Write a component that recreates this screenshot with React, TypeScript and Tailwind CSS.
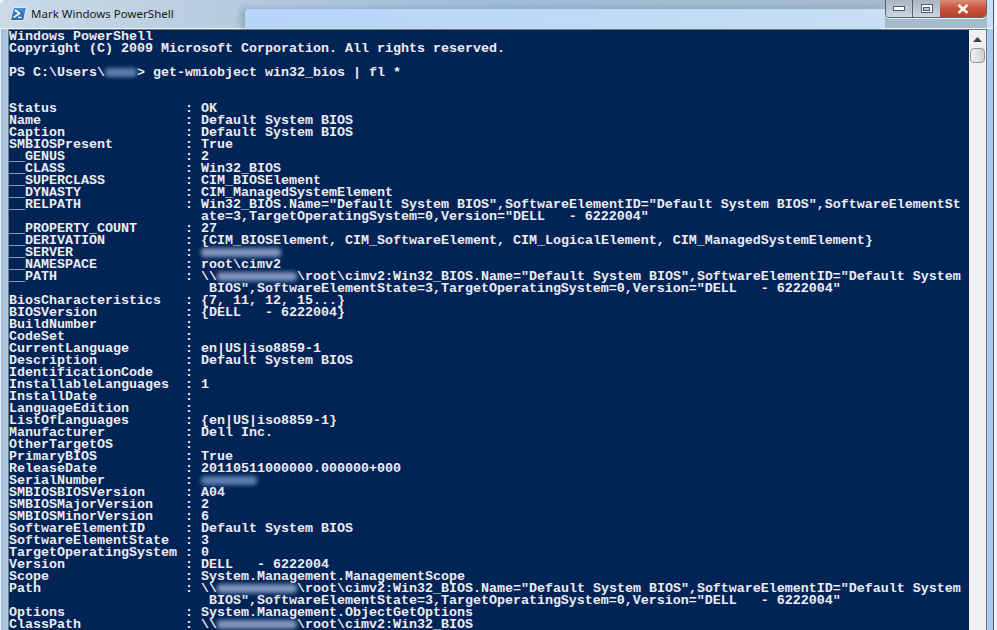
const name = <span className="inline-block h-[9px] w-[80px] align-[-1px] rounded-sm bg-[#8296bd] blur-[2px]" />;
const user = <span className="inline-block h-[9px] w-[32px] align-[-1px] rounded-sm bg-[#5f7db0] blur-[2px]" />;
const serial = <span className="inline-block h-[9px] w-[56px] align-[-1px] rounded-sm bg-[#5f7db0] blur-[2px]" />;

function prop(key: string, value: React.ReactNode = '') {
  return (
    <>
      {key.padEnd(22, ' ')}: {value}
    </>
  );
}

const lines: React.ReactNode[] = [
  'Windows PowerShell',
  'Copyright (C) 2009 Microsoft Corporation. All rights reserved.',
  '',
  <>PS C:\Users\{user}&gt; get-wmiobject win32_bios | fl *</>,
  '',
  '',
  prop('Status', 'OK'),
  prop('Name', 'Default System BIOS'),
  prop('Caption', 'Default System BIOS'),
  prop('SMBIOSPresent', 'True'),
  prop('__GENUS', '2'),
  prop('__CLASS', 'Win32_BIOS'),
  prop('__SUPERCLASS', 'CIM_BIOSElement'),
  prop('__DYNASTY', 'CIM_ManagedSystemElement'),
  prop('__RELPATH', 'Win32_BIOS.Name="Default System BIOS",SoftwareElementID="Default System BIOS",SoftwareElementSt'),
  ' '.repeat(24) + 'ate=3,TargetOperatingSystem=0,Version="DELL   - 6222004"',
  prop('__PROPERTY_COUNT', '27'),
  prop('__DERIVATION', '{CIM_BIOSElement, CIM_SoftwareElement, CIM_LogicalElement, CIM_ManagedSystemElement}'),
  prop('__SERVER', name),
  prop('__NAMESPACE', 'root\\cimv2'),
  prop('__PATH', <>\\{name}\root\cimv2:Win32_BIOS.Name="Default System BIOS",SoftwareElementID="Default System</>),
  ' '.repeat(25) + 'BIOS",SoftwareElementState=3,TargetOperatingSystem=0,Version="DELL   - 6222004"',
  prop('BiosCharacteristics', '{7, 11, 12, 15...}'),
  prop('BIOSVersion', '{DELL   - 6222004}'),
  prop('BuildNumber'),
  prop('CodeSet'),
  prop('CurrentLanguage', 'en|US|iso8859-1'),
  prop('Description', 'Default System BIOS'),
  prop('IdentificationCode'),
  prop('InstallableLanguages', '1'),
  prop('InstallDate'),
  prop('LanguageEdition'),
  prop('ListOfLanguages', '{en|US|iso8859-1}'),
  prop('Manufacturer', 'Dell Inc.'),
  prop('OtherTargetOS'),
  prop('PrimaryBIOS', 'True'),
  prop('ReleaseDate', '20110511000000.000000+000'),
  prop('SerialNumber', serial),
  prop('SMBIOSBIOSVersion', 'A04'),
  prop('SMBIOSMajorVersion', '2'),
  prop('SMBIOSMinorVersion', '6'),
  prop('SoftwareElementID', 'Default System BIOS'),
  prop('SoftwareElementState', '3'),
  prop('TargetOperatingSystem', '0'),
  prop('Version', 'DELL   - 6222004'),
  prop('Scope', 'System.Management.ManagementScope'),
  prop('Path', <>\\{name}\root\cimv2:Win32_BIOS.Name="Default System BIOS",SoftwareElementID="Default System</>),
  ' '.repeat(25) + 'BIOS",SoftwareElementState=3,TargetOperatingSystem=0,Version="DELL   - 6222004"',
  prop('Options', 'System.Management.ObjectGetOptions'),
  prop('ClassPath', <>\\{name}\root\cimv2:Win32_BIOS</>),
];

function PsIcon() {
  return (
    <svg width="17" height="16" viewBox="0 0 17 16">
      <defs>
        <linearGradient id="ps" x1="0" y1="0" x2="0" y2="1">
          <stop offset="0" stopColor="#4a94d6" />
          <stop offset="1" stopColor="#1f5f9f" />
        </linearGradient>
      </defs>
      <path d="M3.5 1.5h13l-3 13H0.5z" fill="url(#ps)" stroke="#dbe9f5" strokeWidth="1" />
      <path d="M5 4l4.5 3.5-6 4" fill="none" stroke="#fff" strokeWidth="1.6" />
      <path d="M8 11.5h3.5" stroke="#fff" strokeWidth="1.4" />
    </svg>
  );
}

export default function App() {
  return (
    <div className="h-[630px] w-[997px] overflow-hidden bg-[#eef4fa]">
      <div className="flex h-[630px] w-[994px] flex-col overflow-hidden rounded-tl-[7px] border-r border-r-[#4a5a6a] bg-[#a9c4df]">
        <div className="flex h-[29px] border-b border-b-[#eef5fb] bg-gradient-to-r from-[#cbdae6] via-[#9fbbd6] to-[#a6bac9]">
          <div className="flex w-[245px] items-center gap-[4px] pl-[10px] pb-[1px]">
            <PsIcon />
            <span className="font-['Noto_Sans'] text-[11.5px] text-[#1a1a1a]">Mark Windows PowerShell</span>
          </div>
          <div className="mt-[9px] w-[640px] rounded-tl-sm bg-gradient-to-r from-[#b4d4f8] to-[#c8dff4] shadow-[-4px_0_6px_rgba(90,120,150,0.45)]" />
          <div className="flex h-[18px] w-[102px] overflow-hidden rounded-b-[5px] border border-t-0 border-[#56646f] shadow-[0_1px_0_#e6f0f8]">
            <div className="flex w-[27px] items-center justify-center border-r border-[#56646f] bg-gradient-to-b from-[#a9b6c2] to-[#cbd6e0]">
              <div className="h-[5px] w-[12px] border border-[#4f5b68] bg-white" />
            </div>
            <div className="flex w-[27px] items-center justify-center bg-gradient-to-b from-[#a9b6c2] to-[#cbd6e0]">
              <div className="flex h-[9px] w-[12px] items-center justify-center border border-[#4f5b68] bg-white">
                <div className="h-[4px] w-[7px] border border-[#4f5b68] bg-[#b9c6d3]" />
              </div>
            </div>
            <div className="flex flex-1 items-center justify-center bg-gradient-to-b from-[#d98a78] via-[#c9523c] to-[#b5402c]">
              <svg width="12" height="10" viewBox="0 0 12 10">
                <path d="M1.5 1l9 8M10.5 1l-9 8" stroke="#f5f5f0" strokeWidth="2.6" />
              </svg>
            </div>
          </div>
          <div className="flex-1 bg-[#c8dff5]" />
        </div>
        <div className="flex h-[601px]">
          <div className="w-[8px] border-l border-l-[#e8eef4] bg-gradient-to-r from-[#a6bed8] to-[#b4c8dc]" />
          <div className="flex w-[979px] border border-b-0 border-[#6d7a88]">
            <div className="w-[961px] overflow-hidden bg-[#012456] pt-[1px] font-['Liberation_Mono'] text-[13.33px] font-bold leading-[12px] text-[#eeedf0]">
              {lines.map((line, i) => (
                <div key={i} className="h-[12px] whitespace-pre">
                  {line}
                </div>
              ))}
            </div>
            <div className="flex w-[17px] flex-col items-center bg-[#f0f0f0]">
              <svg className="mt-[7px]" width="9" height="5" viewBox="0 0 9 5">
                <path d="M4.5 0L9 5H0z" fill="#404040" />
              </svg>
              <div className="mt-[6px] h-[15px] w-[15px] rounded-sm border border-[#979797] bg-gradient-to-r from-[#f2f2f2] to-[#cfcfcf]" />
            </div>
          </div>
          <div className="flex-1 bg-[#a8caf0]" />
        </div>
      </div>
    </div>
  );
}
